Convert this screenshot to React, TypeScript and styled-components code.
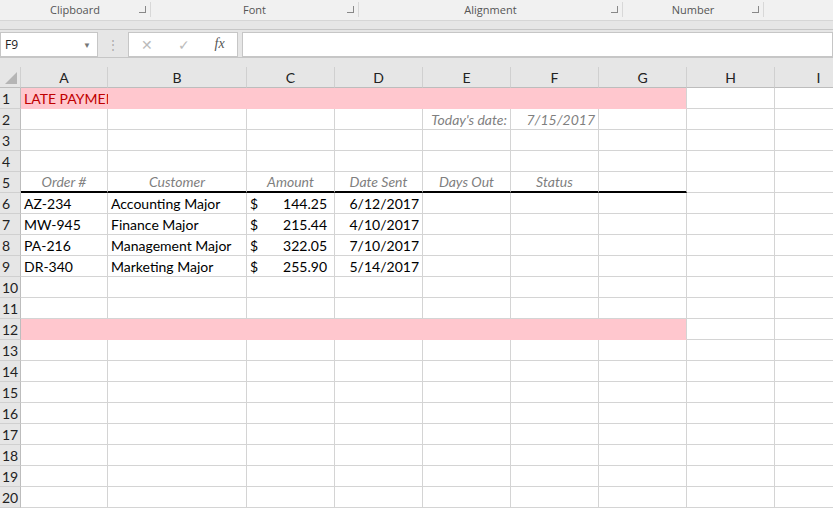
import React from "react";
import styled, { createGlobalStyle } from "styled-components";

const G = createGlobalStyle`
  body { margin:0; font-family: Lato, "Open Sans", sans-serif; background:#fff; overflow:hidden; }
`;

const Ribbon = styled.div`
  height: 20px; background:#f1f1f1; display:flex; font-family:"Open Sans",sans-serif;
  font-size:11px; color:#555; border-bottom:1px solid #d6d6d6;
`;
const Group = styled.div<{ w: number }>`
  width:${p => p.w}px; flex:none; position:relative; display:flex; justify-content:center;
  align-items:center; border-right:1px solid #d8d8d8; height:15px; margin-top:2px;
`;
const Launcher = styled.span`
  position:absolute; right:4px; top:4px; width:6px; height:6px;
  border-left:1px solid #888; border-top:1px solid #888; transform:rotate(180deg);
`;
const Strip = styled.div`height:8px; background:#e6e6e6; border-bottom:1px solid #c6c6c6;`;
const FormulaBar = styled.div`
  display:flex; align-items:center; gap:0; height:28px; background:#e6e6e6; padding-top:1px;
  border-bottom:1px solid #c6c6c6; box-sizing:border-box;
`;
const NameBox = styled.div`
  width:98px; height:25px; background:#fff; border:1px solid #c6c6c6; box-sizing:border-box;
  display:flex; align-items:center; justify-content:space-between; padding:0 6px 0 4px;
  font-family:"Open Sans",sans-serif; font-size:12px; color:#222;
`;
const Dots = styled.div`width:30px; text-align:center; color:#aaa; font-size:12px;`;
const FxBox = styled.div`
  width:110px; height:25px; background:#fff; border:1px solid #c6c6c6; box-sizing:border-box;
  display:flex; align-items:center; justify-content:space-around; color:#bbb; font-size:14px;
`;
const Input = styled.div`flex:1; margin-left:4px; height:25px; background:#fff; border:1px solid #c6c6c6; box-sizing:border-box;`;
const Gap = styled.div`height:9px; background:#e6e6e6;`;

const cols = [21, 87, 139, 88, 88, 88, 88, 88, 88, 88];
const Grid = styled.div`
  display:grid; grid-template-columns:${cols.map(c => c + "px").join(" ")};
  grid-auto-rows:21px; font-family:Lato,"Open Sans",sans-serif; font-size:14px;
`;
const ColHead = styled.div`
  background:#e6e6e6; border-right:1px solid #d0d0d0; border-bottom:1px solid #bdbdbd;
  display:flex; align-items:center; justify-content:center; color:#222; font-size:14px; box-sizing:border-box;
`;
const Corner = styled(ColHead)`position:relative;
  &::after{content:"";position:absolute;right:3px;bottom:3px;border-left:12px solid transparent;border-bottom:12px solid #b5b5b5;}`;
const RowHead = styled.div`
  background:#e6e6e6; border-bottom:1px solid #d0d0d0; border-right:1px solid #bdbdbd;
  display:flex; align-items:center; padding-left:2px; color:#222; box-sizing:border-box;
`;
const Cell = styled.div<{ pink?: boolean; thick?: boolean; align?: string; muted?: boolean; red?: boolean; last?: boolean }>`
  box-sizing:border-box; display:flex; align-items:center; padding:0 3px; white-space:nowrap;
  justify-content:${p => p.align || "flex-start"};
  background:${p => (p.pink ? "#ffc7ce" : "#fff")};
  border-right:1px solid ${p => (p.pink && !p.last ? "#ffc7ce" : "#d4d4d4")};
  border-bottom:${p => (p.thick ? "2px solid #000" : `1px solid ${p.pink ? "#ffc7ce" : "#d4d4d4"}`)};
  color:${p => (p.red ? "#c00000" : p.muted ? "#7f7f7f" : "#000")};
  font-style:${p => (p.muted ? "italic" : "normal")};
  overflow:visible;
`;
const Amt = styled.span`display:flex; justify-content:space-between; width:100%; padding-right:4px;`;

type C = { t?: React.ReactNode; align?: string; muted?: boolean; red?: boolean };
const letters = ["A", "B", "C", "D", "E", "F", "G", "H", "I"];
const data: Record<number, Record<number, C>> = {
  1: { 0: { t: "LATE PAYMENT ANALYSIS", red: true } },
  2: { 4: { t: "Today's date:", align: "flex-end", muted: true }, 5: { t: "7/15/2017", align: "flex-end", muted: true } },
  5: {
    0: { t: "Order #", align: "center", muted: true }, 1: { t: "Customer", align: "center", muted: true },
    2: { t: "Amount", align: "center", muted: true }, 3: { t: "Date Sent", align: "center", muted: true },
    4: { t: "Days Out", align: "center", muted: true }, 5: { t: "Status", align: "center", muted: true },
  },
};
const rows6 = [
  ["AZ-234", "Accounting Major", "144.25", "6/12/2017"],
  ["MW-945", "Finance Major", "215.44", "4/10/2017"],
  ["PA-216", "Management Major", "322.05", "7/10/2017"],
  ["DR-340", "Marketing Major", "255.90", "5/14/2017"],
];
rows6.forEach((r, i) => {
  data[6 + i] = {
    0: { t: r[0] }, 1: { t: r[1] },
    2: { t: <Amt><span>$</span><span>{r[2]}</span></Amt> },
    3: { t: r[3], align: "flex-end" },
  };
});

export default function App() {
  const cells: React.ReactNode[] = [];
  cells.push(<Corner key="c" />);
  letters.forEach(l => cells.push(<ColHead key={l}>{l}</ColHead>));
  for (let r = 1; r <= 20; r++) {
    cells.push(<RowHead key={"r" + r}>{r}</RowHead>);
    for (let c = 0; c < 9; c++) {
      const d = data[r]?.[c] || {};
      const pink = (r === 1 || r === 12) && c < 7;
      cells.push(
        <Cell key={r + "-" + c} pink={pink} last={c === 6} thick={r === 5 && c < 7}
          align={d.align} muted={d.muted} red={d.red}>{d.t}</Cell>
      );
    }
  }
  return (
    <>
      <G />
      <Ribbon>
        <Group w={150}>Clipboard<Launcher /></Group>
        <Group w={207}>Font<Launcher /></Group>
        <Group w={263}>Alignment<Launcher /></Group>
        <Group w={140}>Number<Launcher /></Group>
      </Ribbon>
      <Strip />
      <FormulaBar>
        <NameBox><span>F9</span><span style={{ fontSize: 8, color: "#777" }}>▼</span></NameBox>
        <Dots>⋮</Dots>
        <FxBox><span>✕</span><span>✓</span><span style={{ fontFamily: "Liberation Serif, serif", fontStyle: "italic", color: "#555" }}>fx</span></FxBox>
        <Input />
      </FormulaBar>
      <Gap />
      <Grid>{cells}</Grid>
    </>
  );
}
